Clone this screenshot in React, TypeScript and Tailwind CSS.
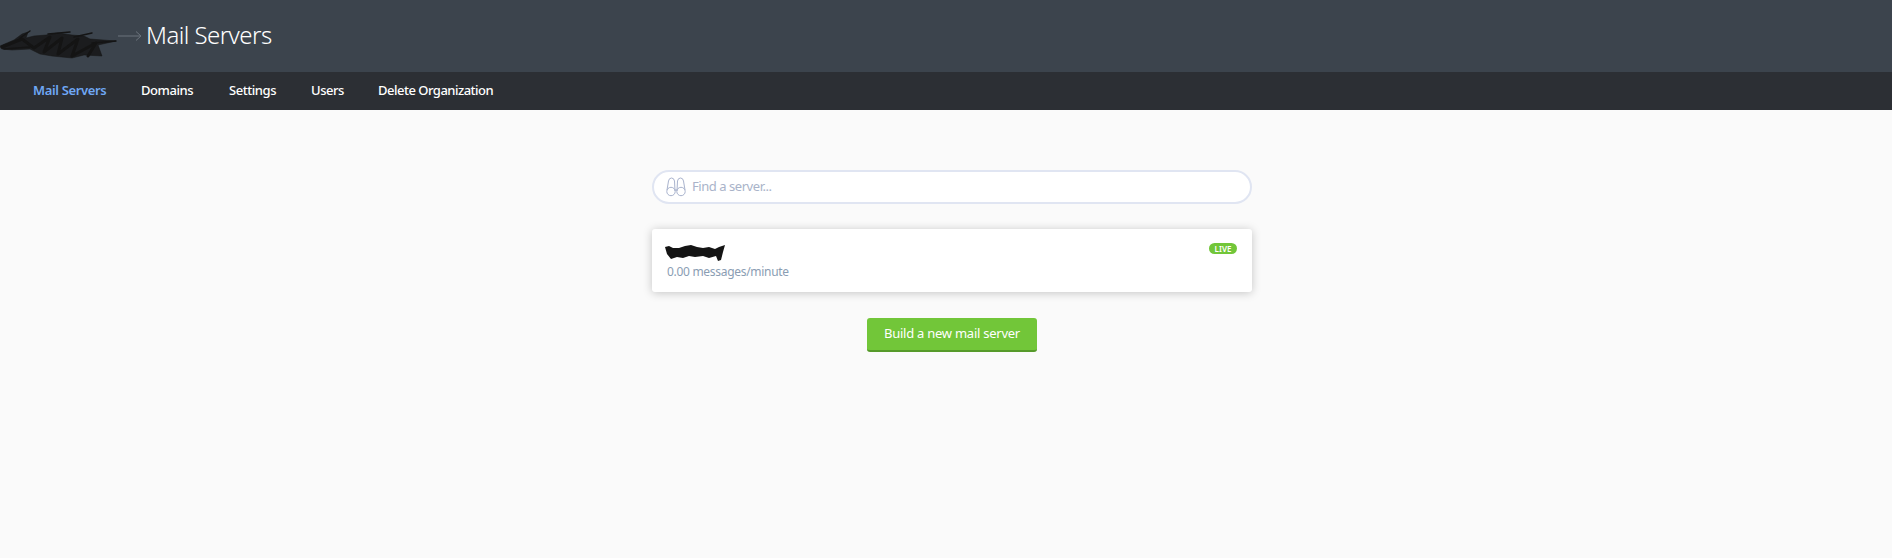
const font = { fontFamily: '"Noto Sans", "Open Sans", sans-serif' };

function Scribble() {
  return (
    <svg width="118" height="48" viewBox="0 0 118 48" className="shrink-0" fill="none" stroke="#141414" strokeLinecap="round" strokeLinejoin="round">
      <path d="M0 34 L14 28 L22 22 L28 20 L26 26 L34 24 L46 23 L58 21 L72 23 L84 24 L90 27 L116 29 L98 33 L102 44 L84 43 L72 46 L52 44 L40 42 L30 37 L12 38 L2 37 Z" fill="#141414" fillOpacity="0.82" strokeWidth="0.5" />
      <path d="M2 35 L22 27 L34 36 L50 25 L44 40 L62 26 L58 42 L78 27 L72 44 L96 31 L88 44" strokeWidth="3" />
      <path d="M20 26 L30 19 M48 22 L70 20 M74 25 L92 21 M92 31 L116 29 M4 37 L30 35" strokeWidth="1.5" />
    </svg>
  );
}

function Arrow() {
  return (
    <svg width="24" height="12" viewBox="0 0 24 12" fill="none" stroke="#6b737c" strokeWidth="1" className="shrink-0">
      <path d="M0 6 H23 M18 1.5 L23 6 L18 10.5" />
    </svg>
  );
}

function Binoculars() {
  return (
    <svg width="20" height="20" viewBox="0 0 20 20" fill="none" stroke="#a9b3cd" strokeWidth="1" className="shrink-0">
      <circle cx="5" cy="14.5" r="4.2" />
      <circle cx="15" cy="14.5" r="4.2" />
      <path d="M1 13 L2.5 4 Q3 1 5.5 1 Q8 1 8.5 4 L9 14" />
      <path d="M19 13 L17.5 4 Q17 1 14.5 1 Q12 1 11.5 4 L11 14" />
      <path d="M9 13 H11" />
    </svg>
  );
}

function RedactedName() {
  return (
    <svg width="60" height="20" viewBox="0 0 60 20" className="block" fill="#141414">
      <path d="M0 3 L4 2 L8 4 L14 4 L20 2 L26 1 L32 3 L38 4 L44 3 L50 5 L54 3 L60 1 L58 8 L56 16 L53 17 L51 12 L44 14 L38 12 L30 13 L24 12 L18 14 L12 13 L6 15 L2 10 Z" />
    </svg>
  );
}

export default function App() {
  const items = [
    { t: 'Mail Servers', c: 'text-[#6fa8f5] font-semibold tracking-[-0.35px] w-[73px]' },
    { t: 'Domains', c: 'text-white font-medium tracking-[-0.45px] w-[53px]' },
    { t: 'Settings', c: 'text-white font-medium tracking-[-0.45px] w-[47px]' },
    { t: 'Users', c: 'text-white font-medium tracking-[-0.45px] w-[32px]' },
    { t: 'Delete Organization', c: 'text-white font-medium tracking-[-0.5px] w-[116px]' },
  ];
  return (
    <div className="min-h-[558px] bg-[#fafafa] flex flex-col" style={font}>
      <header className="h-[72px] bg-[#3c444d] flex items-center">
        <Scribble />
        <Arrow />
        <h1 className="text-white text-[24px] font-light ml-[4px] tracking-[-0.55px] -mt-[2px]">Mail Servers</h1>
      </header>
      <nav className="h-[38px] bg-[#2c2f34] flex items-center pl-[33px] gap-[35px]">
        {items.map(({ t, c }) => (
          <span key={t} className={`text-[13px] whitespace-nowrap ${c}`}>{t}</span>
        ))}
      </nav>
      <main className="w-[600px] mx-[652px] pt-[60px] flex flex-col">
        <div className="h-[34px] rounded-full border-2 border-[#e0e5f2] bg-white flex items-center pl-[12px] gap-[6px]">
          <Binoculars />
          <span className="text-[13px] text-[#a9b3c9] tracking-[-0.45px]">Find a server...</span>
        </div>
        <div className="mt-[25px] h-[63px] bg-white rounded-[3px] shadow-[0_1px_10px_rgba(0,0,0,0.22)] pl-[13px] pr-[15px] pt-[15px] flex justify-between">
          <div>
            <RedactedName />
            <div className="text-[12px] leading-[18px] -mt-[1px] text-[#8a9db3] tracking-[-0.3px] pl-[2px]">0.00 messages/minute</div>
          </div>
          <span className="h-[11px] -mt-[1px] w-[28px] rounded-full bg-[#72c639] text-white text-[8px] leading-[11px] text-center font-semibold">LIVE</span>
        </div>
        <button className="mt-[26px] self-center w-[170px] h-[34px] rounded-[3px] bg-[#72c639] border-b-2 border-[#569a2a] text-white text-[13px] tracking-[-0.25px]">Build a new mail server</button>
      </main>
    </div>
  );
}
